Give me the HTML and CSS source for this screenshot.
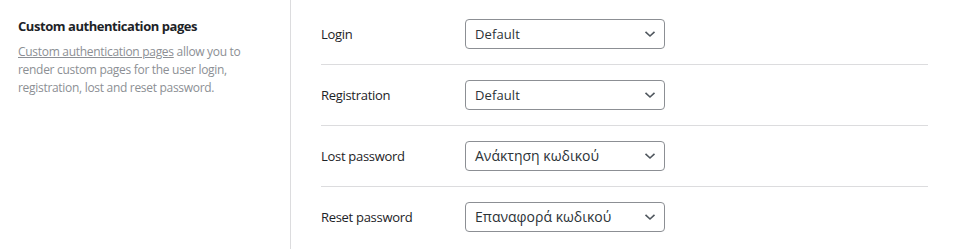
FILE: index.html
```html
<!DOCTYPE html>
<html lang="en">
<head>
<meta charset="utf-8">
<link rel="stylesheet" href="styles.css">
</head>
<body>
<div class="page">
  <aside class="side">
    <h2 class="side-title">Custom authentication pages</h2>
    <p class="side-desc"><a class="side-link" href="#">Custom authentication pages</a> allow you to render custom pages for the user login, registration, lost and reset password.</p>
  </aside>
  <main class="main">
    <div class="row">
      <span class="label">Login</span>
      <div class="select"><span class="select-text latin">Default</span><svg class="chev" width="12" height="8" viewBox="0 0 12 8"><path d="M1.5 1.8 L6 6 L10.5 1.8" fill="none" stroke="#50575e" stroke-width="1.6"/></svg></div>
    </div>
    <div class="row">
      <span class="label">Registration</span>
      <div class="select"><span class="select-text latin">Default</span><svg class="chev" width="12" height="8" viewBox="0 0 12 8"><path d="M1.5 1.8 L6 6 L10.5 1.8" fill="none" stroke="#50575e" stroke-width="1.6"/></svg></div>
    </div>
    <div class="row">
      <span class="label">Lost password</span>
      <div class="select"><span class="select-text">Ανάκτηση κωδικού</span><svg class="chev" width="12" height="8" viewBox="0 0 12 8"><path d="M1.5 1.8 L6 6 L10.5 1.8" fill="none" stroke="#50575e" stroke-width="1.6"/></svg></div>
    </div>
    <div class="row last">
      <span class="label">Reset password</span>
      <div class="select"><span class="select-text">Επαναφορά κωδικού</span><svg class="chev" width="12" height="8" viewBox="0 0 12 8"><path d="M1.5 1.8 L6 6 L10.5 1.8" fill="none" stroke="#50575e" stroke-width="1.6"/></svg></div>
    </div>
  </main>
</div>
</body>
</html>
```
FILE: styles.css
```css
html, body {
  margin: 0;
  padding: 0;
  background: #ffffff;
}
body {
  font-family: "Open Sans", "Noto Sans", sans-serif;
  color: #1d2327;
  width: 956px;
  height: 249px;
  overflow: hidden;
}
.page {
  display: grid;
  grid-template-columns: 291px 1fr;
  height: 249px;
}
.side {
  border-right: 1px solid #dcdcde;
  padding: 16px 18px 0 18px;
}
.side-title {
  margin: 0;
  font-size: 13px;
  font-weight: 700;
  line-height: 20px;
  letter-spacing: -0.45px;
  color: #1d2327;
}
.side-desc {
  margin: 7px 0 0 0;
  font-size: 12px;
  line-height: 18px;
  letter-spacing: -0.3px;
  color: #8c8f94;
}
.side-link {
  color: #8c8f94;
  text-decoration: underline;
}
.main {
  padding: 4px 28px 0 30px;
}
.row {
  display: flex;
  align-items: center;
  padding: 15px 0;
  border-bottom: 1px solid #dcdcde;
}
.row.last {
  border-bottom: none;
}
.label {
  width: 144px;
  font-size: 13px;
  line-height: 18px;
  letter-spacing: -0.3px;
  color: #1d2327;
}
.select {
  box-sizing: border-box;
  width: 200px;
  height: 30px;
  border: 1px solid #8c8f94;
  border-radius: 4px;
  display: flex;
  align-items: center;
  justify-content: space-between;
  padding: 0 8px 0 9px;
}
.select-text {
  font-size: 14px;
  line-height: 18px;
  color: #2c3338;
}
.select-text.latin {
  font-size: 13px;
  letter-spacing: 0.1px;
}
.chev {
  display: block;
}
```
